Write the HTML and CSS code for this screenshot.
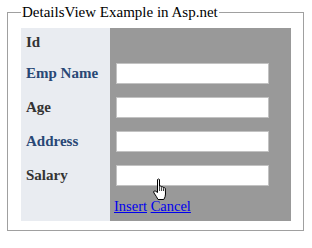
FILE: index.html
```html
<!DOCTYPE html>
<html>
<head>
<meta charset="utf-8">
<link rel="stylesheet" href="styles.css">
</head>
<body>
<fieldset class="box">
  <legend class="legend">DetailsView Example in Asp.net</legend>
  <table class="dv">
    <tr class="row r-id"><td class="lbl">Id</td><td class="val"></td></tr>
    <tr class="row r-in alt"><td class="lbl">Emp Name</td><td class="val"><input class="txt" type="text"></td></tr>
    <tr class="row r-in"><td class="lbl">Age</td><td class="val"><input class="txt" type="text"></td></tr>
    <tr class="row r-in alt"><td class="lbl">Address</td><td class="val"><input class="txt" type="text"></td></tr>
    <tr class="row r-in"><td class="lbl">Salary</td><td class="val"><input class="txt" type="text"></td></tr>
    <tr class="row r-cmd"><td class="lbl"></td><td class="val cmd"><a href="#" class="lnk">Insert</a> <a href="#" class="lnk">Cancel</a></td></tr>
  </table>
</fieldset>
<svg class="cursor" width="14" height="23" viewBox="0 0 14 23">
  <path d="M4.5,1.5 Q5.5,0.5 6.5,1.5 L6.5,8.5 L6.8,8.5 Q7.6,7.6 8.5,8.5 L8.6,9.2 Q9.5,8.3 10.4,9.3 L10.5,10 Q11.4,9.3 12.3,10.3 L12.5,16 Q12.5,19 10.8,21.5 L5,21.5 Q3.5,18.5 1,15 Q0.2,13.6 1.2,13 Q2.4,12.5 4.5,14.5 Z" fill="#ffffff" stroke="#000000" stroke-width="1" stroke-linejoin="round"/>
  <path d="M6.6,9 L6.6,13 M8.6,9.5 L8.6,13 M10.5,10.3 L10.5,13" stroke="#000" stroke-width="0.8" fill="none"/>
</svg>
</body>
</html>
```
FILE: styles.css
```css
html, body {
  margin: 0;
  padding: 0;
  background: #ffffff;
}
body {
  font-family: "Liberation Serif", "Times New Roman", serif;
  font-size: 15px;
  position: relative;
  width: 312px;
  height: 248px;
  overflow: hidden;
}
.box {
  box-sizing: border-box;
  width: 297px;
  margin: 4px 0 0 7px;
  padding: 7px 11px 9px 13px;
  border: 1px solid #a0a0a0;
  min-width: 0;
}
.legend {
  padding: 0 1px;
  margin: 0;
  line-height: 17px;
  color: #000;
}
.dv {
  border-collapse: collapse;
  border-spacing: 0;
  width: 270px;
  color: #333333;
}
.dv td {
  padding: 0;
  vertical-align: middle;
}
.lbl {
  width: 89px;
  background: #E9ECF1;
  font-weight: bold;
  padding-left: 5px !important;
  box-sizing: border-box;
  white-space: nowrap;
  line-height: 17px;
}
.val {
  background: #999999;
  padding-left: 6px !important;
}
.alt { color: #284775; }
.r-id td { height: 28px; }
.r-in td { height: 34px; }
.r-cmd td { height: 28.5px; }
.txt {
  display: block;
  box-sizing: border-box;
  width: 153px;
  height: 21px;
  margin: 0;
  padding: 0;
  border: 1px solid #c2c2c2;
  background: #ffffff;
  outline: none;
}
.cmd {
  padding-left: 4px !important;
  line-height: 17px;
  font-size: 14.5px;
}
.lnk {
  color: #0000EE;
  text-decoration: underline;
}
.cursor {
  position: absolute;
  left: 153px;
  top: 178px;
}
```
